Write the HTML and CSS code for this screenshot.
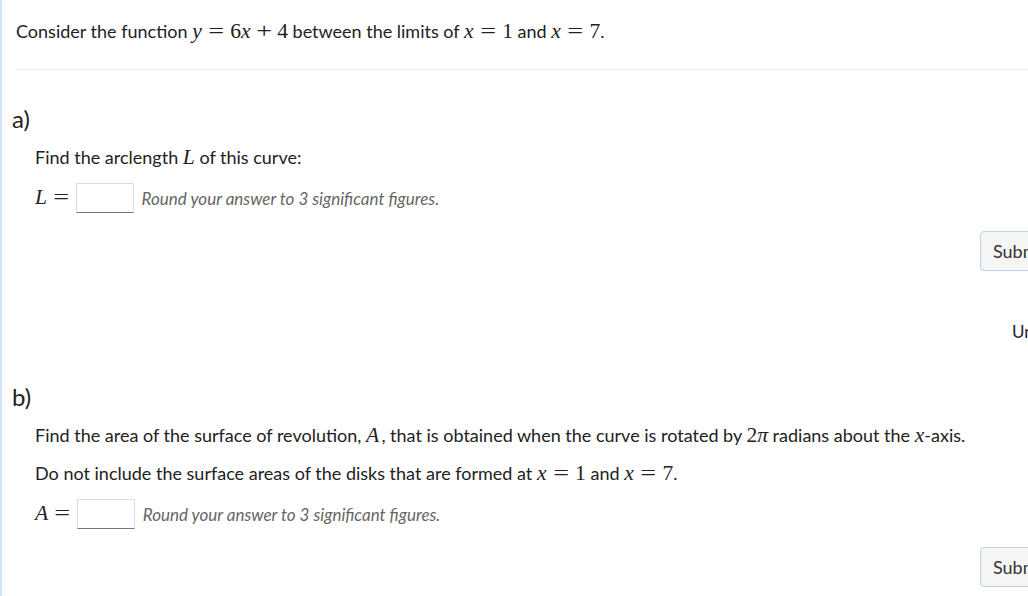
FILE: index.html
```html
<!DOCTYPE html>
<html>
<head>
	<meta charset="utf-8">
	<title>Question</title>
	<link rel="stylesheet" href="styles.css">
</head>
<body>
<div class="question">
	<div class="statement">
		<p>Consider the function <span class="m"><i>y</i><span class="rel">=</span>6<i>x</i><span class="bin">+</span>4</span> between the limits of <span class="m"><i>x</i><span class="rel">=</span>1</span> and <span class="m"><i>x</i><span class="rel">=</span>7</span>.</p>
	</div>

	<div class="part">
		<div class="part-name">a)</div>
		<div class="part-body">
			<p>Find the arclength <span class="m"><i>L</i></span> of this curve:</p>
			<div class="answer">
				<span class="m"><i>L</i><span class="rel">=</span></span><span class="box"></span><span class="hint">Round your answer to 3 significant figures.</span>
			</div>
		</div>
		<div class="controls">
			<button class="submit">Submit part</button>
			<div class="status">Unanswered</div>
		</div>
	</div>

	<div class="part">
		<div class="part-name">b)</div>
		<div class="part-body">
			<p>Find the area of the surface of revolution, <span class="m"><i>A</i></span>&thinsp;, that is obtained when the curve is rotated by <span class="m">2<i>π</i></span> radians about the <span class="m"><i>x</i></span>-axis.</p>
			<p>Do not include the surface areas of the disks that are formed at <span class="m"><i>x</i><span class="rel">=</span>1</span> and <span class="m"><i>x</i><span class="rel">=</span>7</span>.</p>
			<div class="answer">
				<span class="m"><i>A</i><span class="rel">=</span></span><span class="box"></span><span class="hint">Round your answer to 3 significant figures.</span>
			</div>
		</div>
		<div class="controls">
			<button class="submit">Submit part</button>
		</div>
	</div>
</div>
</body>
</html>
```

FILE: styles.css
```css
html, body {
	margin:0;
	background:#fff;
	overflow:hidden;
	}
body {
	color:#222;
	font:18px "Lato", "Noto Sans", sans-serif;
	}
p {
	margin:0;
	line-height:24px;
	}
.question {
	border-left:2px solid #cfe2f7;
	min-height:596px;
	width:1200px;
	}
.statement {
	margin-left:14px;
	padding:19px 0 26px 0;
	border-bottom:1px solid #eee;
	}
.m {
	font-family:"Liberation Serif", serif;
	font-size:1.2em;
	line-height:1;
	}
.m i {
	font-style:italic;
	}
/* wider = and + like the TeX glyphs */
.rel, .bin {
	display:inline-block;
	transform:scaleX(1.3);
	}
.rel {
	margin:0 0.38em;
	}
.bin {
	margin:0 0.33em;
	}
.part {
	padding-top:34px;
	}
.part-name {
	margin-left:10px;
	font-size:24px;
	line-height:30px;
	}
.part-body {
	margin-left:33px;
	padding-top:11px;
	}
.part-body p {
	margin-bottom:14px;
	}
.answer {
	display:flex;
	align-items:center;
	}
.box {
	display:inline-block;
	width:56px;
	height:28px;
	border:1px solid #ddd;
	border-bottom-color:#777;
	}
.hint {
	margin-left:8px;
	color:#666;
	font-style:italic;
	font-size:17px;
	}
.controls {
	margin-left:978px;
	padding-top:18px;
	}
.submit {
	font:18px "Lato", "Noto Sans", sans-serif;
	color:#333;
	background:#f5f5f5;
	border:1px solid #b8d4ee;
	border-radius:4px;
	padding:8px 12px;
	}
.status {
	margin:50px 0 6px 32px;
	font-size:17px;
	}
```
